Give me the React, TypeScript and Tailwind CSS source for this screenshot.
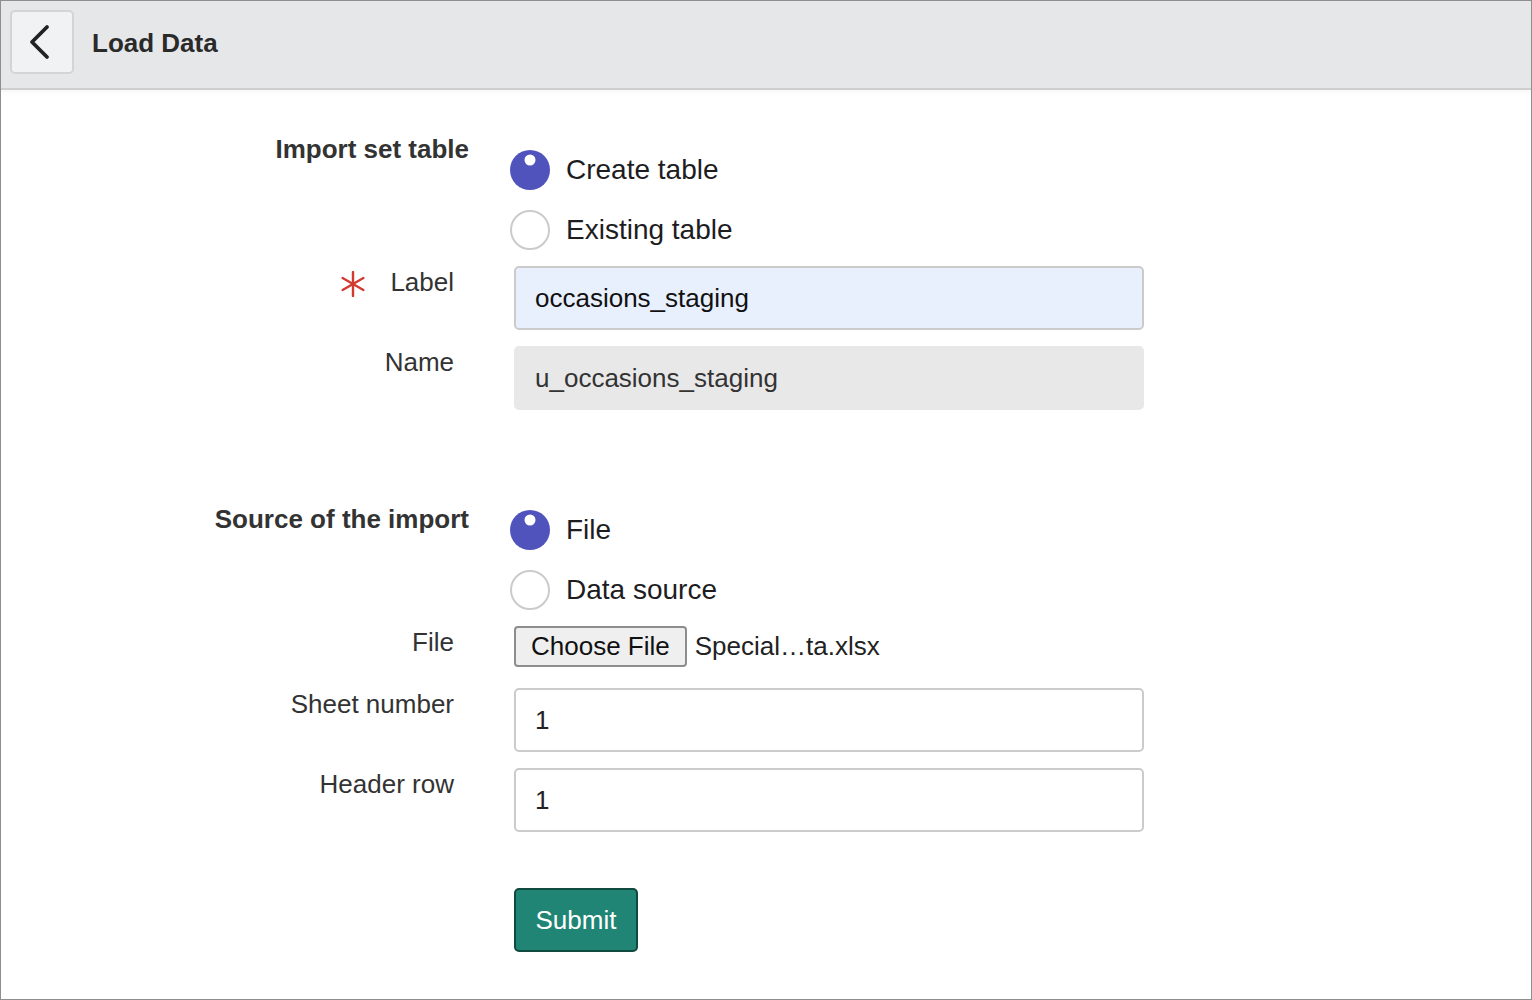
import React from "react";

const font = { fontFamily: '"Liberation Sans", Arial, Helvetica, sans-serif' };

function Radio({ checked, label }: { checked?: boolean; label: string }) {
  return (
    <div className="flex h-[60px] items-center">
      <svg width="40" height="40" viewBox="0 0 40 40" className="shrink-0">
        {checked ? (
          <>
            <circle cx="20" cy="20" r="20" fill="#5153bd" />
            <circle cx="20" cy="10" r="5.5" fill="#ffffff" />
          </>
        ) : (
          <circle cx="20" cy="20" r="19" fill="#ffffff" stroke="#cbcbcb" strokeWidth="2" />
        )}
      </svg>
      <span className="ml-4 text-[28px] text-[#1d1d1f]">{label}</span>
    </div>
  );
}

function FieldLabel({ children, required }: { children: React.ReactNode; required?: boolean }) {
  return (
    <div className="flex w-[468px] shrink-0 items-start justify-end pr-[15px] text-[26px] leading-[32px] text-[#333333]">
      {required && (
        <svg width="26" height="26" viewBox="0 0 26 26" className="mr-[24px] mt-[5px]">
          <g stroke="#d33a2f" strokeWidth="2.4" strokeLinecap="round">
            <line x1="13" y1="1" x2="13" y2="25" />
            <line x1="2.6" y1="7" x2="23.4" y2="19" />
            <line x1="2.6" y1="19" x2="23.4" y2="7" />
          </g>
        </svg>
      )}
      <span>{children}</span>
    </div>
  );
}

function SectionLabel({ children }: { children: React.ReactNode }) {
  return (
    <div className="w-[468px] shrink-0 pt-[3px] text-right text-[26px] font-bold leading-[32px] text-[#333333]">
      {children}
    </div>
  );
}

export default function App() {
  return (
    <div style={font} className="h-[1000px] w-[1532px] overflow-hidden border border-[#8e8e8e] bg-white">
      {/* Header */}
      <div className="flex h-[89px] items-start border-b-2 border-[#cfcfcf] bg-[#e6e7e9] shadow-[0_2px_4px_rgba(0,0,0,0.04)]">
        <button className="ml-[9px] mt-[9px] flex h-[64px] w-[64px] items-center justify-center rounded-[5px] border-2 border-[#d3d4d6] bg-[#f1f2f4]">
          <svg width="26" height="36" viewBox="0 0 26 36" className="mr-[2px]">
            <polyline
              points="19,3 4,18 19,33"
              fill="none"
              stroke="#222222"
              strokeWidth="3.8"
              strokeLinecap="round"
              strokeLinejoin="round"
            />
          </svg>
        </button>
        <h1 className="ml-[18px] mt-[26px] text-[26px] font-bold leading-[32px] text-[#2a2a2a]">Load Data</h1>
      </div>

      {/* Form */}
      <div className="flex flex-col">
        {/* Import set table */}
        <div className="mt-[40px] flex">
          <SectionLabel>Import set table</SectionLabel>
          <div className="ml-[41px] mt-[10px] flex flex-col">
            <Radio checked label="Create table" />
            <Radio label="Existing table" />
          </div>
        </div>

        <div className="mt-[6px] flex">
          <FieldLabel required>Label</FieldLabel>
          <div className="ml-[45px] flex h-[64px] w-[630px] items-center rounded-[5px] border-2 border-[#cbcbcb] bg-[#e8f0fe] px-[19px] text-[26px] text-[#111111]">
            occasions_staging
          </div>
        </div>

        <div className="mt-[16px] flex">
          <FieldLabel>Name</FieldLabel>
          <div className="ml-[45px] flex h-[64px] w-[630px] items-center rounded-[5px] border-2 border-[#e8e8e9] bg-[#e8e8e9] px-[19px] text-[26px] text-[#333333]">
            u_occasions_staging
          </div>
        </div>

        {/* Source of the import */}
        <div className="mt-[90px] flex">
          <SectionLabel>Source of the import</SectionLabel>
          <div className="ml-[41px] flex flex-col">
            <Radio checked label="File" />
            <Radio label="Data source" />
          </div>
        </div>

        <div className="mt-[6px] flex">
          <FieldLabel>File</FieldLabel>
          <div className="ml-[45px] flex items-center">
            <div className="flex h-[41px] items-center rounded-[4px] border-2 border-[#8d8d8d] bg-[#efefef] px-[15px] text-[26px] text-[#111111]">
              Choose File
            </div>
            <span className="ml-[8px] text-[26px] text-[#222222]">Special…ta.xlsx</span>
          </div>
        </div>

        <div className="mt-[21px] flex">
          <FieldLabel>Sheet number</FieldLabel>
          <div className="ml-[45px] flex h-[64px] w-[630px] items-center rounded-[5px] border-2 border-[#cbcbcb] bg-white px-[19px] text-[26px] text-[#222222]">
            1
          </div>
        </div>

        <div className="mt-[16px] flex">
          <FieldLabel>Header row</FieldLabel>
          <div className="ml-[45px] flex h-[64px] w-[630px] items-center rounded-[5px] border-2 border-[#cbcbcb] bg-white px-[19px] text-[26px] text-[#222222]">
            1
          </div>
        </div>

        <div className="mt-[56px] flex">
          <div className="w-[468px] shrink-0" />
          <button className="ml-[45px] flex h-[64px] w-[124px] items-center justify-center rounded-[5px] border-2 border-[#10493e] bg-[#208574] text-[26px] text-white">
            Submit
          </button>
        </div>
      </div>
    </div>
  );
}
